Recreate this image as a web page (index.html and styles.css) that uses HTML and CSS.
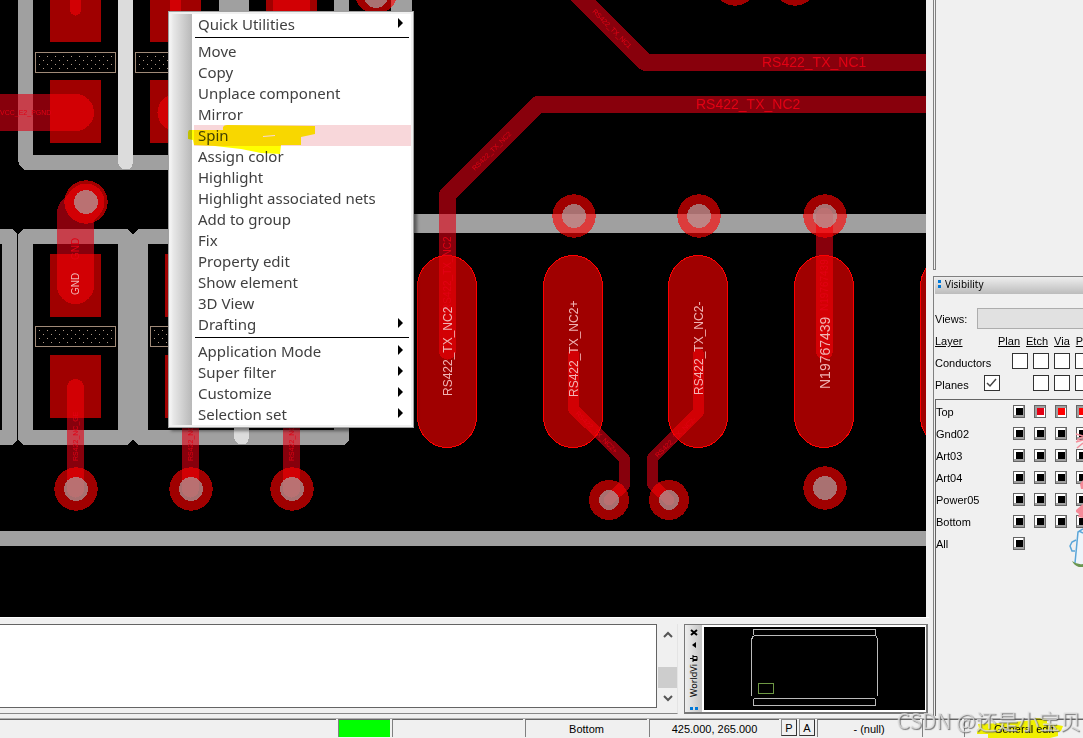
FILE: index.html
```html
<!DOCTYPE html>
<html lang="en">
<head>
<meta charset="utf-8">
<title>PCB Editor</title>
<link rel="stylesheet" href="styles.css">
</head>
<body>
<div class="app">
  <div class="workspace">
    <main class="left">
      <section class="viewport">
        <svg class="board" aria-label="Board layout">
          <defs>
            <pattern id="dots" width="8" height="8" patternUnits="userSpaceOnUse" x="39" y="0">
              <rect width="1" height="1" fill="#b09a88"/><rect x="4" y="4" width="1" height="1" fill="#b09a88"/>
            </pattern>
            <g id="silk"><rect x="35.500" y="52.500" width="80" height="20" fill="url(#dots)" stroke="#a08a78"/></g>
            <rect id="finger" width="59" height="192" rx="29.500" ry="31"/>
          </defs>
          <g fill="#a0a0a0">
            <path d="M18 0H33V155H334V0H349V170H25L20 166L18 161Z"/>
            <rect x="219" y="0" width="30" height="20"/>
            <rect x="391" y="0" width="21" height="20"/>
            <path d="M0 229H12L17 234V440L12 445H0V430H2V244H0Z"/>
            <path fill-rule="evenodd" d="M23 229H128L133 235L138 229H344L349 234V440L344 445H138L133 439L128 445H23L18 440V234ZM33 244V430H118V244ZM148 244V430H334V244Z"/>
            <rect x="349" y="214" width="2000" height="19"/>
            <rect x="0" y="531" width="2400" height="15"/>
          </g>
          <g fill="#dcdcdc">
            <path d="M118 0H133V162Q132 169 128 169H123Q119 168 118 162Z"/>
            <path d="M234 400H249V437Q248 444 244 444H239Q235 443 234 437Z"/>
          </g>
          <use href="#silk"/><use href="#silk" x="100"/>
          <use href="#silk" y="274"/><use href="#silk" x="115" y="274"/>
          <g opacity=".6" fill="none" stroke="#e20014" stroke-linecap="round" stroke-linejoin="round">
            <path stroke-width="11" d="M75.500 -10V10M175.500 -10V20"/>
            <path stroke-width="37" d="M-20 112.500H75.500M176 112.500H220M86 202L75.500 213V285.500M291.500 -10V20"/>
            <path stroke-width="17" d="M75.500 387.500V489M190.500 387.500V489M291.500 387.500V489M573 -10L645.500 62.500H2400M2400 104.500H538L447.500 195V351M824.500 216V351"/>
            <path stroke-width="11" d="M573.500 354V409L624.500 459V485L609 500M698.500 354V412L652.500 458V484L669 500"/>
          </g>
          <g opacity=".63" fill="#f00">
            <path d="M50 0H101V42H50ZM150 0H201V42H150ZM266 0H317V42H266ZM50 80H101V143H50ZM150 80H201V143H150ZM50 254H101V317H50ZM165 254H216V317H165ZM50 355H101V418H50ZM165 355H216V418H165Z"/>
            <circle cx="86" cy="202" r="21.700"/><circle cx="376" cy="-8" r="21.700"/>
            <circle cx="76" cy="489" r="21.700"/><circle cx="191" cy="489" r="21.700"/><circle cx="292" cy="489" r="21.700"/>
            <circle cx="574" cy="216" r="21.700"/><circle cx="699" cy="216" r="21.700"/><circle cx="825" cy="216" r="21.700"/><circle cx="825" cy="488" r="21.700"/>
            <circle cx="735" cy="-16" r="21.700"/><circle cx="795" cy="-16" r="21.700"/>
            <circle cx="609" cy="500" r="20"/><circle cx="669" cy="500" r="20"/>
            <use href="#finger" x="417.500" y="255.500"/><use href="#finger" x="543.500" y="255.500"/><use href="#finger" x="668.500" y="255.500"/><use href="#finger" x="794.500" y="255.500"/><use href="#finger" x="920.500" y="255.500"/>
          </g>
          <g fill="none" stroke="#f00">
            <use href="#finger" x="417.500" y="255.500"/><use href="#finger" x="543.500" y="255.500"/><use href="#finger" x="668.500" y="255.500"/><use href="#finger" x="794.500" y="255.500"/><use href="#finger" x="920.500" y="255.500"/>
          </g>
          <g fill="#adadad" opacity=".65">
            <circle cx="86" cy="202" r="12"/><circle cx="376" cy="-4" r="12"/><circle cx="76" cy="489" r="12"/><circle cx="191" cy="489" r="12"/><circle cx="292" cy="489" r="12"/>
            <circle cx="574" cy="216" r="12"/><circle cx="699" cy="216" r="12"/><circle cx="825" cy="216" r="12"/><circle cx="825" cy="488" r="12"/>
            <circle cx="609" cy="500" r="10"/><circle cx="669" cy="500" r="10"/>
          </g>
          <g class="net">
            <text class="net-l" x="762" y="67">RS422_TX_NC1</text>
            <text class="net-l" x="696" y="109">RS422_TX_NC2</text>
            <text class="net-s" x="0" y="115">VCC_E2_PGND</text>
            <text class="net-s" transform="translate(592 12) rotate(45)">RS422_TX_NC1</text>
            <text class="net-s" transform="translate(475 171) rotate(-45)">RS422_TX_NC2</text>
            <text class="net-m" transform="translate(451 311) rotate(-90)">RS422_TX_NC2</text>
            <text class="net-m" transform="translate(828 311) rotate(-90)">N19767439</text>
            <text class="net-m" transform="translate(79 260) rotate(-90)">GND</text>
            <text class="net-s" transform="translate(78 461) rotate(-90)">RS422_NC_GE</text>
            <text class="net-s" transform="translate(193 461) rotate(-90)">RS422_NC</text>
            <text class="net-s" transform="translate(294 461) rotate(-90)">RS422_NC</text>
            <text class="net-s" transform="translate(575 414) rotate(45)">RS422_TX_NC2+</text>
            <text class="net-s" transform="translate(658 458) rotate(-45)">RS422_TX_NC2-</text>
          </g>
          <g class="pin">
            <text class="net-m" transform="translate(79 295) rotate(-90)">GND</text>
            <text class="pin-m" transform="translate(452 396) rotate(-90)">RS422_TX_NC2</text>
            <text class="pin-m" transform="translate(578 397) rotate(-90)">RS422_TX_NC2+</text>
            <text class="pin-m" transform="translate(703 395) rotate(-90)">RS422_TX_NC2-</text>
            <text class="net-l" transform="translate(830 389) rotate(-90)">N19767439</text>
          </g>
        </svg>

        <div class="menu" role="menu">
          <button class="item sub" role="menuitem">Quick Utilities</button>
          <hr class="sep">
          <button class="item" role="menuitem">Move</button>
          <button class="item" role="menuitem">Copy</button>
          <button class="item" role="menuitem">Unplace component</button>
          <button class="item" role="menuitem">Mirror</button>
          <button class="item active" role="menuitem">Spin</button>
          <button class="item" role="menuitem">Assign color</button>
          <button class="item" role="menuitem">Highlight</button>
          <button class="item" role="menuitem">Highlight associated nets</button>
          <button class="item" role="menuitem">Add to group</button>
          <button class="item" role="menuitem">Fix</button>
          <button class="item" role="menuitem">Property edit</button>
          <button class="item" role="menuitem">Show element</button>
          <button class="item" role="menuitem">3D View</button>
          <button class="item sub" role="menuitem">Drafting</button>
          <hr class="sep">
          <button class="item sub" role="menuitem">Application Mode</button>
          <button class="item sub" role="menuitem">Super filter</button>
          <button class="item sub" role="menuitem">Customize</button>
          <button class="item sub" role="menuitem">Selection set</button>
          <svg class="marker menu-marker" viewBox="0 0 128 30" aria-hidden="true">
            <path fill-rule="evenodd" fill="#ff0" d="M1 5L35 5V2Q36 0 39 0L127 1V9L113 12V20H93L92 29L73 28L53 24L27 21L6 20L5 15L0 14V7ZM75 11L87 10V11L75 12Z"/>
          </svg>
        </div>
      </section>

      <section class="bottom">
        <div class="console">
          <textarea class="log" aria-label="Command log" readonly></textarea>
          <div class="scroll">
            <button class="arrow" aria-label="Scroll up"><svg viewBox="0 0 10 7"><path d="M1 6L5 2L9 6" fill="none" stroke="#555" stroke-width="2"/></svg></button>
            <div class="thumb"></div>
            <button class="arrow" aria-label="Scroll down"><svg viewBox="0 0 10 7"><path d="M1 1L5 5L9 1" fill="none" stroke="#555" stroke-width="2"/></svg></button>
          </div>
        </div>
        <div class="world">
          <div class="world-bar">
            <button class="tool" aria-label="Close"><svg viewBox="0 0 8 7"><path d="M1 1L7 6M7 1L1 6" stroke="#000" stroke-width="2"/></svg></button>
            <button class="tool" aria-label="Collapse"><svg viewBox="0 0 8 7"><path d="M6 0V6L2 3Z"/></svg></button>
            <button class="tool" aria-label="Pin"><svg viewBox="0 0 8 7"><path d="M0 3.500H3M3 0V7M3 1.500H7V5.500H3M3 4.500H7" fill="none" stroke="#000"/></svg></button>
            <span class="world-name">WorldVi</span>
            <span class="grip-h"></span>
          </div>
          <svg class="world-map" viewBox="0 0 222 84" preserveAspectRatio="xMidYMid meet" aria-label="World view">
            <g fill="none" stroke="#bdbdbd"><path d="M49.500 2.500H172.500V8.500H49.500ZM49.500 72.500H172.500V79.500H49.500ZM49.500 9.500H48.500V11.500H47.500V69.500M172.500 8.500L174.500 11V69.500H175.500"/><rect x="54.500" y="57.500" width="15" height="10" stroke="#6f9a45"/></g>
          </svg>
        </div>
      </section>
    </main>

    <aside class="dock">
      <div class="dock-top"></div>
      <section class="vis">
        <h2 class="vis-title"><span class="grip"></span>Visibility</h2>
        <div class="views"><label for="views">Views:</label><select id="views" class="combo"><option></option></select></div>
        <div class="heads"><a class="head layer" href="#layer">Layer</a><a class="head" href="#plan">Plan</a><a class="head" href="#etch">Etch</a><a class="head" href="#via">Via</a><a class="head" href="#pin">Pin</a></div>
        <div class="row"><span>Conductors</span><i></i><input type="checkbox" aria-label="Conductors plan"><input type="checkbox" aria-label="Conductors etch"><input type="checkbox" aria-label="Conductors via"><input type="checkbox" aria-label="Conductors pin"></div>
        <div class="row"><label for="planes">Planes</label><input id="planes" type="checkbox" checked><i></i><input type="checkbox" aria-label="Planes etch"><input type="checkbox" aria-label="Planes via"><input type="checkbox" aria-label="Planes pin"></div>
        <div class="layers">
          <div class="row"><span>Top</span><i></i><button class="sw" aria-label="Top plan"></button><button class="sw crimson" aria-label="Top etch"></button><button class="sw red" aria-label="Top via"></button><button class="sw red" aria-label="Top pin"></button></div>
          <div class="row"><span>Gnd02</span><i></i><button class="sw" aria-label="Gnd02 plan"></button><button class="sw" aria-label="Gnd02 etch"></button><button class="sw" aria-label="Gnd02 via"></button><button class="sw" aria-label="Gnd02 pin"></button></div>
          <div class="row"><span>Art03</span><i></i><button class="sw" aria-label="Art03 plan"></button><button class="sw" aria-label="Art03 etch"></button><button class="sw" aria-label="Art03 via"></button><button class="sw" aria-label="Art03 pin"></button></div>
          <div class="row"><span>Art04</span><i></i><button class="sw" aria-label="Art04 plan"></button><button class="sw" aria-label="Art04 etch"></button><button class="sw" aria-label="Art04 via"></button><button class="sw" aria-label="Art04 pin"></button></div>
          <div class="row"><span>Power05</span><i></i><button class="sw" aria-label="Power05 plan"></button><button class="sw" aria-label="Power05 etch"></button><button class="sw" aria-label="Power05 via"></button><button class="sw" aria-label="Power05 pin"></button></div>
          <div class="row"><span>Bottom</span><i></i><button class="sw" aria-label="Bottom plan"></button><button class="sw" aria-label="Bottom etch"></button><button class="sw" aria-label="Bottom via"></button><button class="sw" aria-label="Bottom pin"></button></div>
          <div class="row"><span>All</span><i></i><button class="sw" aria-label="All layers"></button></div>
        </div>
      </section>
      <svg class="sticker" viewBox="0 0 14 144" aria-hidden="true">
        <g stroke="#f5909c" stroke-width="1.500" fill="none"><path d="M7 11L14 13M8 17L14 14M7 19L14 17M8 25L14 20"/></g>
        <path d="M14 57L11 61L12 66H14ZM14 81L7 87V89L10 91L9 94L14 95Z" fill="#f58a98"/>
        <path d="M9 108Q10 105 14 105V142H6L5 138Z" fill="#eef5fa"/>
        <path d="M14 106L9 109L6 140M10 108L14 110M7 117L3 119L1 123L3 128L6 128" fill="none" stroke="#5aa5d8" stroke-width="1.500"/>
        <path d="M3 138Q8 142 14 141V145Q6 144 3 138Z" fill="#6b9650"/>
      </svg>
    </aside>
  </div>

  <footer class="status">
    <span class="cell grow"></span>
    <span class="cell busy"></span>
    <span class="cell message"></span>
    <span class="cell side">Bottom</span>
    <span class="cell coords">425.000, 265.000</span>
    <button class="key">P</button>
    <button class="key">A</button>
    <span class="cell object">- (null)</span>
    <span class="cell spare"></span>
    <span class="cell mode">General edit
      <svg class="marker mode-marker" viewBox="0 0 87 22" aria-hidden="true"><path fill="#ff0" d="M1 6L27 5L57 2V0L70 1V5L86 8L84 13L81 14V18L65 22H11V16H0V12L2 10Z"/></svg>
    </span>
    <span class="watermark">CSDN @还是小宝贝</span>
  </footer>
</div>
</body>
</html>
```

FILE: styles.css
```css
* { box-sizing: border-box; }
body { margin: 0; background: #f0f0f0; color: #000; font: 11px "Liberation Sans", "Noto Sans CJK SC", sans-serif; overflow: hidden; }
button { font: inherit; color: inherit; border: 0; padding: 0; background: none; }
.app { display: flex; flex-direction: column; height: 100vh; }
.workspace { display: flex; flex: 1; min-height: 0; }
.left { display: flex; flex-direction: column; flex: 1; min-width: 0; }

.viewport { position: relative; flex: 1; min-height: 0; margin-right: 3px; background: #000; }
.board { display: block; width: 100%; height: 100%; shape-rendering: crispEdges; }
.net { fill: #e20014; }
.pin { fill: #f0b4b4; }
.net-l { font-size: 14px; }
.pin-m { font-size: 12px; }
.net-m { font-size: 10px; }
.net-s { font-size: 7px; }

.menu { position: absolute; left: 168px; top: 11px; width: 246px; padding: 2px 2px 2px 25px; border: 1px solid #a0a0a0; background: linear-gradient(90deg, #f2f2f2, #f2f2f2 2px, #e8e8e8 4px, #b8b8b8 23px, #fff 23px); box-shadow: 3px 3px 3px rgba(0, 0, 0, .45), inset -2px 0 #f0f0f0, inset 0 -2px #f0f0f0, inset 0 2px #f0f0f0; font: 15px "Noto Sans", sans-serif; color: #404040; }
.item { position: relative; display: block; width: 100%; height: 21px; padding-left: 4px; text-align: left; line-height: 21px; white-space: nowrap; }
.item.active { background: #f8d7da; }
.sub::after { content: ""; position: absolute; right: 8px; top: 4px; border-left: 5px solid #000; border-top: 5px solid transparent; border-bottom: 5px solid transparent; }
.sep { height: 1px; margin: 2px 2px 3px 1px; border: 0; background: #000; }
.marker { position: absolute; mix-blend-mode: multiply; pointer-events: none; }
.menu-marker { left: 19px; top: 113px; width: 128px; height: 30px; }

.bottom { display: flex; gap: 6px; flex: 0 0 101px; min-height: 0; padding: 6px 0 4px; border-top: 1px solid #fff; }
.console { display: flex; flex: 1; gap: 1px; min-height: 0; padding-bottom: 5px; border-right: 1px solid #e4e4e4; border-bottom: 1px solid #888; }
.log { flex: 1; min-width: 0; margin: 0; resize: none; border: 1px solid #646464; border-left: 0; background: #fff; }
.scroll { display: flex; flex-direction: column; flex: 0 0 19px; }
.arrow { display: flex; align-items: center; justify-content: center; height: 20px; }
.arrow svg { width: 10px; height: 7px; }
.thumb { height: 21px; margin-top: auto; background: #cdcdcd; }

.world { display: flex; flex: 0 0 244px; min-height: 0; margin-right: 1px; border: 1px solid #787878; border-width: 1px 2px 2px 1px; }
.world-bar { display: flex; flex-direction: column; align-items: center; flex: 0 0 17px; background: linear-gradient(90deg, #eee, #c4c4c4); padding: 4px 0 2px; gap: 6px; }
.tool { display: flex; }
.tool svg { width: 8px; height: 7px; }
.world-name { writing-mode: vertical-rl; transform: rotate(180deg); font: 9px/14px "Noto Sans", sans-serif; margin: -4px 0; white-space: nowrap; }
.grip-h { width: 8px; height: 3px; margin-top: auto; background: linear-gradient(90deg, #0078d7 3px, transparent 3px, transparent 5px, #0078d7 5px); }
.world-map { flex: 1; min-width: 0; height: 100%; border: 2px solid #fff; border-right-width: 1px; background: #000; shape-rendering: crispEdges; }

.dock { position: relative; display: flex; flex-direction: column; gap: 6px; flex: 0 0 154px; overflow: hidden; padding-left: 4px; }
.dock-top { height: 270px; border-left: 1px solid #808080; border-bottom: 1px solid #808080; width: 3px; border-right: 1px solid #808080; }
.vis { flex: 1; border-left: 1px solid #808080; border-top: 1px solid #808080; padding-left: 1px; }
.vis-title { display: flex; align-items: center; gap: 4px; height: 17px; margin: 0; padding: 0 0 3px 3px; background: linear-gradient(#eee, #bcbcbc); font: 10px "Noto Sans", sans-serif; }
.grip { width: 3px; height: 8px; background: linear-gradient(#0078d7 3px, transparent 3px, transparent 5px, #0078d7 5px); }
.views { display: flex; align-items: center; margin: 14px 0 5px; }
.views label { width: 42px; }
.combo { appearance: none; flex: 1; height: 21px; border: 1px solid #adadad; border-right: 0; border-radius: 0; background: #e1e1e1; }
.heads { display: flex; gap: 6px; height: 16px; margin-bottom: 2px; line-height: 14px; }
.head { flex: none; color: #000; text-decoration: underline; }
.layer { width: 57px; }
.row { display: grid; grid-template-columns: 49px 28px repeat(4, 21px); align-items: center; height: 22px; white-space: nowrap; }
.row input { appearance: none; width: 16px; height: 16px; margin: 0 0 4px; border: 1px solid #333; background: #fff; }
.row input:checked { background: #fff url("data:image/svg+xml,%3Csvg xmlns='http://www.w3.org/2000/svg' viewBox='0 0 14 14'%3E%3Cpath d='M2 7l3 3 6-7' fill='none' stroke='%23444' stroke-width='1.5'/%3E%3C/svg%3E"); }
.layers { margin-top: 3px; border-top: 1px solid #646464; border-left: 1px solid #646464; padding-top: 1px; min-height: 317px; }
.layers .row { grid-template-columns: 49px 28px repeat(4, 21px); }
.sw { width: 12px; height: 13px; margin-bottom: 2px; border: 1px solid #646464; background: linear-gradient(#000, #000) 2px 2px / 7px 7px no-repeat, linear-gradient(#fff, #fff) 0 0 / 9px 9px no-repeat, #a0a0a0; }
.crimson { background: linear-gradient(#e20014, #e20014) 2px 2px / 7px 7px no-repeat, linear-gradient(#fff, #fff) 2px 2px / 8px 9px no-repeat, #a0a0a0; }
.red { background: linear-gradient(#f00, #f00) 2px 2px / 7px 7px no-repeat, linear-gradient(#fff, #fff) 2px 2px / 8px 9px no-repeat, #a0a0a0; }
.sticker { position: absolute; right: 0; top: 423px; width: 14px; height: 144px; }

.status { position: relative; display: flex; gap: 2px; height: 20px; border-top: 1px solid #b0b0b0; }
.cell { display: flex; align-items: center; justify-content: center; height: 18px; border-top: 1px solid #646464; border-left: 1px solid #808080; white-space: nowrap; }
.grow { flex: 1; border-left: 0; }
.busy { width: 52px; background: #0f0; }
.message { width: 131px; }
.side { width: 122px; }
.coords { width: 130px; }
.object { width: 103px; }
.spare { width: 40px; }
.mode { position: relative; width: 119px; }
.mode-marker { left: 12px; top: -2px; width: 87px; height: 22px; }
.key { width: 16px; height: 17px; border: 1px solid; border-color: #888 #333 #333 #888; }
.watermark { position: absolute; right: 2px; bottom: 4px; font: 21px/28px "Noto Sans CJK SC", sans-serif; color: rgba(225, 225, 225, .75); text-shadow: 1px 1px 1px rgba(90, 90, 90, .8); white-space: nowrap; pointer-events: none; }
```
